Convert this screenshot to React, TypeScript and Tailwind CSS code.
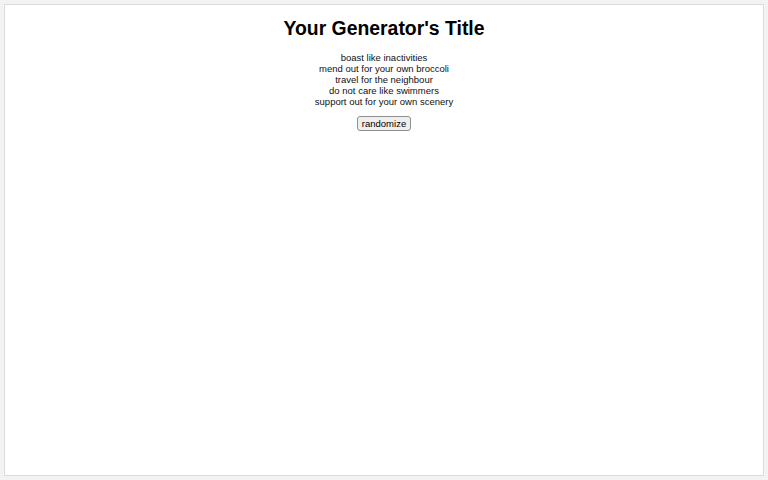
import { useState } from "react";

const lines = [
  "boast like inactivities",
  "mend out for your own broccoli",
  "travel for the neighbour",
  "do not care like swimmers",
  "support out for your own scenery",
];

export default function App() {
  const [items] = useState(lines);

  return (
    <div className="h-[480px] w-[768px] bg-[#f3f3f3] p-[4px] font-['Liberation_Sans',Arial,sans-serif] text-black">
      <div className="flex h-full flex-col items-center border border-[#dcdcdc] bg-white">
        <h1 className="mt-[10px] text-[19.4px] font-bold leading-[26px]">Your Generator's Title</h1>
        <div className="mt-[11px] flex flex-col items-center text-[9.5px] leading-[11px] text-[#111]">
          {items.map((l) => (
            <div key={l}>{l}</div>
          ))}
        </div>
        <button className="mt-[9px] rounded-[3px] border border-[#8f8f8f] bg-[#efefef] px-[4px] py-[1px] text-[9.5px] leading-[11px] text-black">
          randomize
        </button>
      </div>
    </div>
  );
}
